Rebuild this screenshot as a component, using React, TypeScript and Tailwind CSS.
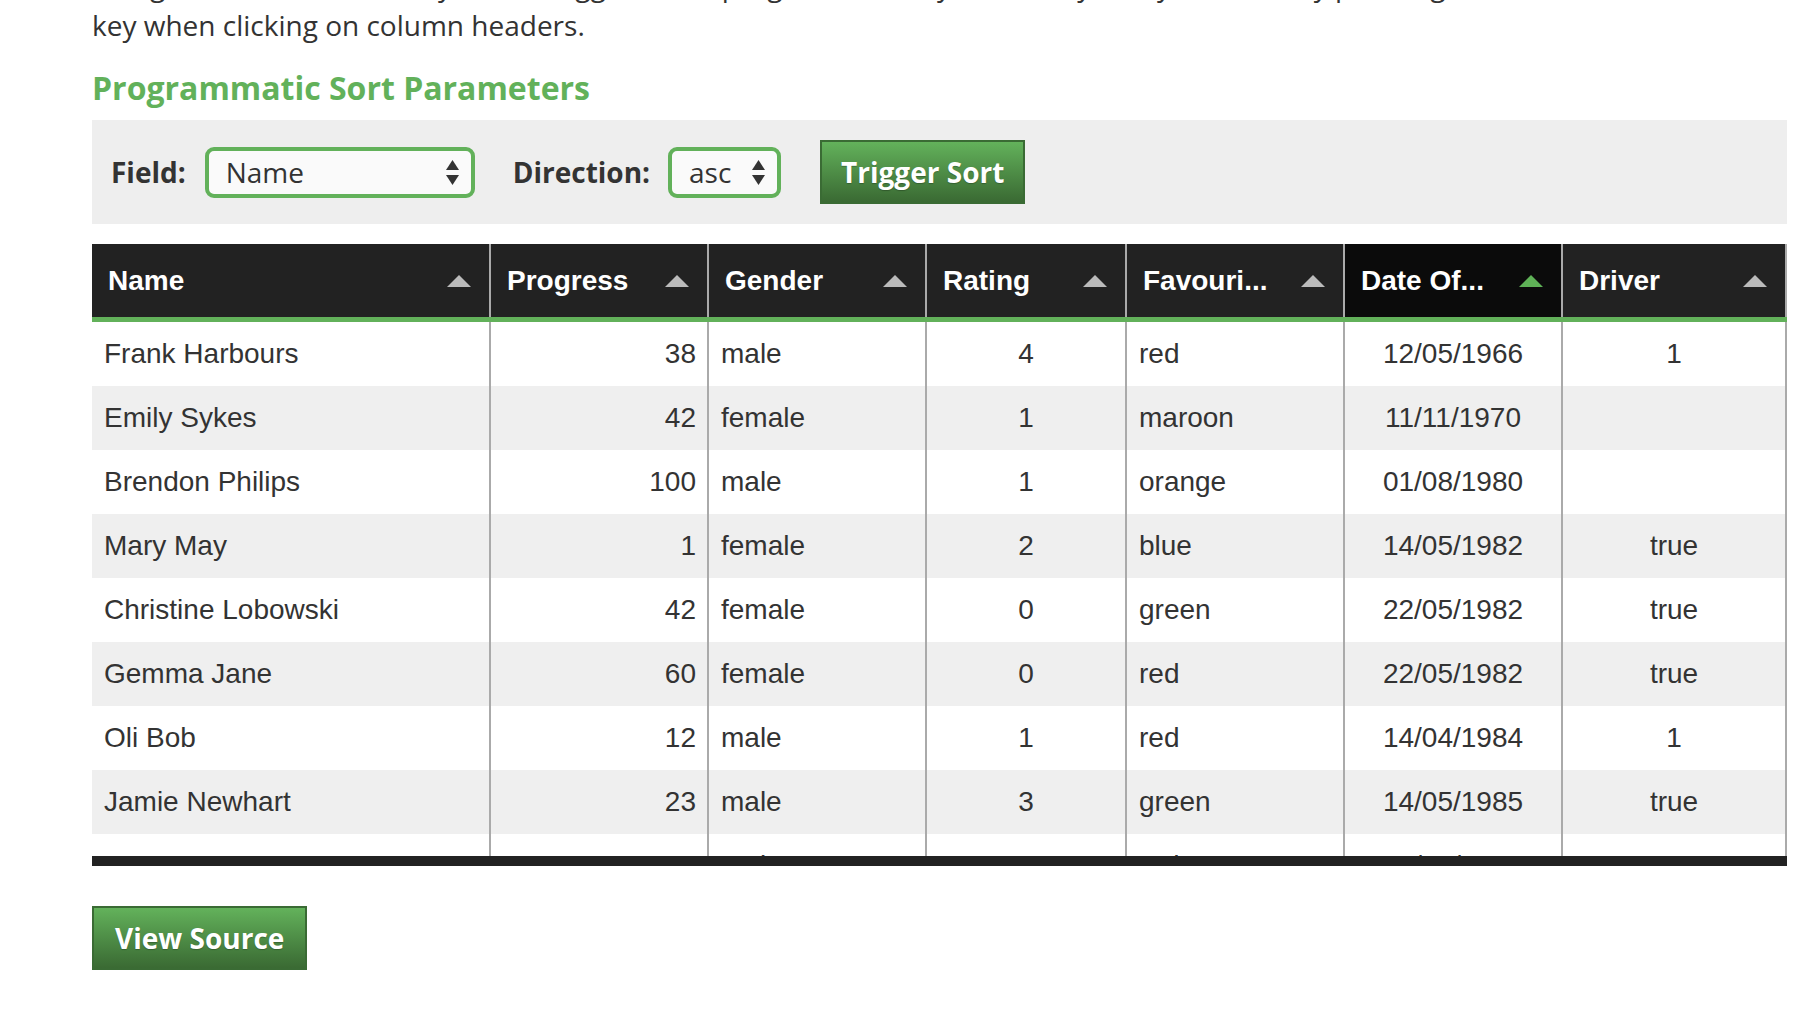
import React from 'react';

type Align = 'left' | 'right' | 'center';

interface Column {
  field: keyof Row;
  title: string;
  align: Align;
  sorted?: boolean;
}

interface Row {
  name: string;
  progress: string;
  gender: string;
  rating: string;
  col: string;
  dob: string;
  car: string;
}

const columns: Column[] = [
  { field: 'name', title: 'Name', align: 'left' },
  { field: 'progress', title: 'Progress', align: 'right' },
  { field: 'gender', title: 'Gender', align: 'left' },
  { field: 'rating', title: 'Rating', align: 'center' },
  { field: 'col', title: 'Favouri...', align: 'left' },
  { field: 'dob', title: 'Date Of...', align: 'center', sorted: true },
  { field: 'car', title: 'Driver', align: 'center' },
];

const rows: Row[] = [
  { name: 'Frank Harbours', progress: '38', gender: 'male', rating: '4', col: 'red', dob: '12/05/1966', car: '1' },
  { name: 'Emily Sykes', progress: '42', gender: 'female', rating: '1', col: 'maroon', dob: '11/11/1970', car: '' },
  { name: 'Brendon Philips', progress: '100', gender: 'male', rating: '1', col: 'orange', dob: '01/08/1980', car: '' },
  { name: 'Mary May', progress: '1', gender: 'female', rating: '2', col: 'blue', dob: '14/05/1982', car: 'true' },
  { name: 'Christine Lobowski', progress: '42', gender: 'female', rating: '0', col: 'green', dob: '22/05/1982', car: 'true' },
  { name: 'Gemma Jane', progress: '60', gender: 'female', rating: '0', col: 'red', dob: '22/05/1982', car: 'true' },
  { name: 'Oli Bob', progress: '12', gender: 'male', rating: '1', col: 'red', dob: '14/04/1984', car: '1' },
  { name: 'Jamie Newhart', progress: '23', gender: 'male', rating: '3', col: 'green', dob: '14/05/1985', car: 'true' },
  { name: 'James Newman', progress: '73', gender: 'male', rating: '5', col: 'red', dob: '22/03/1998', car: '' },
];

const alignClass: Record<Align, string> = {
  left: 'justify-start pl-[12px]',
  right: 'justify-end pr-[11px]',
  center: 'justify-center',
};

function SelectArrows() {
  return (
    <svg width="13" height="25" viewBox="0 0 13 25" className="shrink-0">
      <polygon points="6.5,0 13,10 0,10" fill="#333" />
      <polygon points="0,15 13,15 6.5,25" fill="#333" />
    </svg>
  );
}

function FakeSelect({ value, width }: { value: string; width: string }) {
  return (
    <div className={`${width} h-[51px] flex items-center justify-between pl-[17px] pr-[12px] bg-[#fafafa] border-4 border-[#62b15a] rounded-[9px] text-[28px] text-[#333]`}>
      <span className="leading-none">{value}</span>
      <SelectArrows />
    </div>
  );
}

function GreenButton({ label, pad }: { label: string; pad: string }) {
  return (
    <button className={`h-[64px] ${pad} border-2 border-[#3a6b34] bg-linear-to-b from-[#63b25b] to-[#3a6a33] text-white font-bold text-[28px] leading-none font-['Open_Sans',sans-serif] [text-shadow:0_1px_1px_rgba(0,0,0,0.25)]`}>
      {label}
    </button>
  );
}

export default function App() {
  return (
    <div className="w-[1810px] h-[1016px] overflow-hidden bg-white pl-[92px] pr-[23px] font-['Open_Sans',sans-serif] text-[#333]">
      <p className="mt-[-35px] text-[28px] leading-[40px] whitespace-nowrap overflow-hidden">
        <span className="block">Using the setSort function you can trigger a sort programmatically, or sort by many columns by pressing the shift</span>
        <span className="block">key when clicking on column headers.</span>
      </p>

      <h3 className="mt-[23px] text-[32px] leading-[40px] font-bold text-[#62b15a]">Programmatic Sort Parameters</h3>

      {/* sort controls */}
      <div className="mt-[12px] h-[104px] bg-[#eeeeee] flex items-center pl-[19px]">
        <span className="text-[28px] font-bold mr-[19px]">Field:</span>
        <FakeSelect value="Name" width="w-[270px]" />
        <span className="text-[28px] font-bold ml-[38px] mr-[18px]">Direction:</span>
        <FakeSelect value="asc" width="w-[113px]" />
        <div className="ml-[39px]">
          <GreenButton label="Trigger Sort" pad="px-[19px]" />
        </div>
      </div>

      {/* table */}
      <div className="mt-[20px] font-['Liberation_Sans',Arial,sans-serif]">
        <div className="grid grid-cols-[399px_218px_218px_200px_218px_218px_224px] h-[78px] bg-[#222] border-b-[5px] border-[#62b15a]">
          {columns.map(c => (
            <div key={c.field} className={`flex items-center justify-between pl-[16px] pr-[18px] border-r-2 border-[#aaa] ${c.sorted ? 'bg-[#0b0b0b]' : ''}`}>
              <span className="text-[28px] font-bold text-white whitespace-nowrap">{c.title}</span>
              <span className={`w-0 h-0 border-l-[12px] border-r-[12px] border-b-[12px] border-l-transparent border-r-transparent ${c.sorted ? 'border-b-[#5fb257]' : 'border-b-[#bbbbbb]'}`} />
            </div>
          ))}
        </div>
        <div className="h-[544px] overflow-hidden border-b-[10px] border-[#222]">
          {rows.map((r, i) => (
            <div key={i} className={`grid grid-cols-[399px_218px_218px_200px_218px_218px_224px] h-[64px] ${i % 2 === 1 ? 'bg-[#efefef]' : 'bg-white'}`}>
              {columns.map(c => (
                <div key={c.field} className={`flex items-center border-r-2 border-[#aaa] text-[28px] text-[#333] whitespace-nowrap ${alignClass[c.align]}`}>
                  {r[c.field]}
                </div>
              ))}
            </div>
          ))}
        </div>
      </div>

      <div className="mt-[40px]">
        <GreenButton label="View Source" pad="px-[21px]" />
      </div>
    </div>
  );
}
